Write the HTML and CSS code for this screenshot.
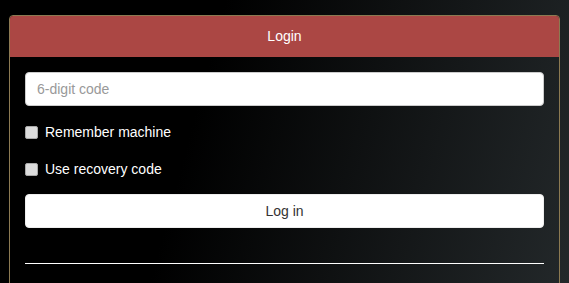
FILE: index.html
```html
<!DOCTYPE html>
<html lang="en">
<head>
    <meta charset="UTF-8">
    <meta name="viewport" content="width=device-width, initial-scale=1.0">
    <title>Login</title>
    <link rel="stylesheet" href="styles.css">
</head>
<body>
    <div class="container">
        <div class="panel">
            <div class="panel-heading">Login</div>
            <div class="panel-body">
                <form class="login-form">
                    <input class="form-control" type="text" placeholder="6-digit code">
                    <label class="checkbox">
                        <input type="checkbox"> Remember machine
                    </label>
                    <label class="checkbox">
                        <input type="checkbox"> Use recovery code
                    </label>
                    <button class="btn" type="submit">Log in</button>
                </form>
                <hr>
            </div>
        </div>
    </div>
</body>
</html>
```

FILE: styles.css
```css
html, body {
    height: 100%;
}

body {
    font-family: "Liberation Sans", Arial, sans-serif;
    font-size: 14px;
    margin: 0;
    padding: 0;
    color: #fff;
    background: linear-gradient(105deg, #000 35%, #23282a 100%);
    overflow: hidden;
}

.container {
    padding: 15px 9px 0 9px;
}

.panel {
    border: 1px solid #8c7a52;
    border-radius: 4px;
    height: 400px;
}

.panel-heading {
    background-color: #ab4744;
    height: 40px;
    line-height: 40px;
    text-align: center;
    border-bottom: 1px solid transparent;
    border-radius: 3px 3px 0 0;
}

.panel-body {
    padding: 15px;
}

.login-form {
    display: flex;
    flex-direction: column;
}

.form-control {
    box-sizing: border-box;
    height: 34px;
    padding: 6px 11px;
    font-family: inherit;
    font-size: 14px;
    color: #555;
    background: #fff;
    border: 1px solid #ccc;
    border-radius: 4px;
    margin: 0 0 15px;
}

.form-control::placeholder {
    color: #999;
}

.checkbox {
    display: flex;
    align-items: center;
    gap: 7px;
    height: 20px;
    line-height: 20px;
    margin-top: 1px;
    margin-bottom: 16px;
}

.checkbox input {
    appearance: none;
    -webkit-appearance: none;
    box-sizing: border-box;
    margin: 0;
    width: 13px;
    height: 13px;
    background: #dcdcdc;
    border: 1px solid #a8a8a8;
    border-radius: 2px;
}

.checkbox:last-of-type {
    margin-bottom: 15px;
}

.btn {
    height: 34px;
    font-family: inherit;
    font-size: 14px;
    color: #333;
    background: #fff;
    border: 1px solid #eee;
    border-radius: 4px;
    cursor: pointer;
}

hr {
    margin: 35px 0 0;
    border: 0;
    border-top: 1px solid #fff;
}
```
